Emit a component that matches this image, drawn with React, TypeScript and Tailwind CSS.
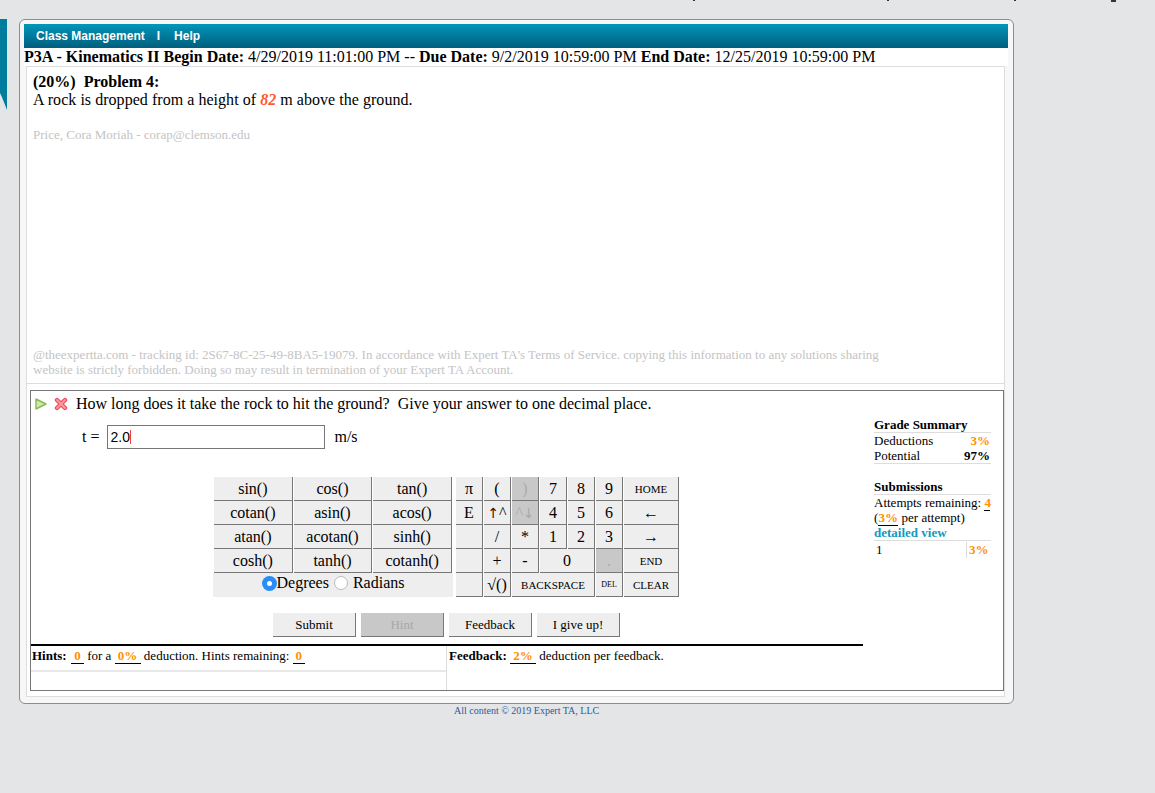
import React from "react";

const serif = "font-['Liberation_Serif',serif]";

function Fn({ t }: { t: string }) {
  return <div className="flex items-center justify-center bg-[#eeeeee] border-r border-b border-[#777] mr-px text-[16px] leading-[18px]">{t}</div>;
}

function Key({ t, cls = "text-[16px]", dis = false }: { t: React.ReactNode; cls?: string; dis?: boolean }) {
  return (
    <div className={`flex items-center justify-center mr-px border-r border-b border-[#777] leading-[18px] ${dis ? "bg-[#c8c8c8] text-[#aaa]" : "bg-[#eeeeee] text-black"} ${cls}`}>
      {t}
    </div>
  );
}

function Btn({ t, dis = false }: { t: string; dis?: boolean }) {
  return (
    <div className={`w-[83px] h-[24px] flex items-center justify-center border-r border-b border-[#777] text-[13px] ${dis ? "bg-[#c8c8c8] text-[#a8a8a8]" : "bg-[#eeeeee] text-black"}`}>
      {t}
    </div>
  );
}

function Val({ t, w }: { t: string; w: string }) {
  return <span className={`inline-block text-center font-bold text-[#ff9000] border-b border-black leading-[14px] ${w}`}>{t}</span>;
}

export default function App() {
  const fns = ["sin()", "cos()", "tan()", "cotan()", "asin()", "acos()", "atan()", "acotan()", "sinh()", "cosh()", "tanh()", "cotanh()"];
  return (
    <div className={`relative min-h-[793px] bg-[#e4e5e7] pt-[19px] pl-[19px] text-black ${serif}`}>
      <svg className="absolute left-0 top-[19px]" width="7" height="91" viewBox="0 0 7 91">
        <path d="M0 0H7V91C5 86 3 80 0 74Z" fill="#007c9d" />
      </svg>
      <div className="absolute left-[693px] top-0 h-px w-[2px] bg-[#333]" />
      <div className="absolute left-[887px] top-0 h-px w-[2px] bg-[#333]" />
      <div className="absolute left-[1014px] top-0 h-px w-[2px] bg-[#333]" />
      <div className="absolute left-[1111px] top-0 h-[2px] w-[5px] bg-[#333]" />

      <div className="w-[995px] h-[685px] border border-[#8c8c8c] rounded-[6px] bg-[#f7f7f7] pt-[4px] pl-[4px] pr-[5px]">
        <div className="h-[24px] bg-gradient-to-b from-[#0096bb] to-[#005f7d] flex items-center pl-[12px] font-['Liberation_Sans',sans-serif] font-bold text-[12px] text-white">
          <span>Class Management</span>
          <span className="ml-[12px]">I</span>
          <span className="ml-[14px]">Help</span>
        </div>
        <div className="h-[18px] bg-white text-[16px] leading-[18px] whitespace-nowrap">
          <b>P3A - Kinematics II Begin Date:</b> 4/29/2019 11:01:00 PM -- <b>Due Date:</b> 9/2/2019 10:59:00 PM <b>End Date:</b> 12/25/2019 10:59:00 PM
        </div>
        <div className="ml-[2px] w-[979px] h-[318px] border border-[#dddddd] bg-white pl-[6px] pt-[6px] flex flex-col">
          <div className="text-[16px] leading-[18px] font-bold">(20%)&nbsp; Problem 4:</div>
          <div className="text-[16px] leading-[18px] tracking-[0.04px]">
            A rock is dropped from a height of <b className="italic text-[#ff5a2c]">82</b> m above the ground.
          </div>
          <div className="mt-[19px] text-[13px] leading-[14px] text-[#c4c4c4]">Price, Cora Moriah - corap@clemson.edu</div>
          <div className="mt-auto mb-[6px] text-[13px] leading-[15px] text-[#c4c4c4] w-[860px]">
            @theexpertta.com - tracking id: 2S67-8C-25-49-8BA5-19079. In accordance with Expert TA's Terms of Service. copying this information to any solutions sharing website is strictly forbidden. Doing so may result in termination of your Expert TA Account.
          </div>
        </div>
        <div className="ml-[2px] w-[979px] h-[313px] border-x border-b border-[#dddddd] bg-white pl-[3px] pr-[1px] pt-[6px]">
          <div className="h-[301px] w-[974px] border border-[#777] flex flex-col">
            <div className="flex flex-1">
              <div className="w-[832px]">
                <div className="flex items-center h-[14px] mt-[6px] ml-[4px]">
                  <svg width="12" height="12" viewBox="0 0 12 12">
                    <path d="M1 1L11 6L1 11Z" fill="#cdeaa6" stroke="#8ab85a" strokeWidth="1.4" strokeLinejoin="round" />
                  </svg>
                  <svg className="ml-[7px]" width="14" height="14" viewBox="0 0 14 14">
                    <path d="M3 3L11 11M11 3L3 11" stroke="#ee5060" strokeWidth="4.4" strokeLinecap="round" />
                    <path d="M3 3L11 11M11 3L3 11" stroke="#ff9aa2" strokeWidth="1.8" strokeLinecap="round" />
                  </svg>
                  <span className="ml-[8px] text-[16px] leading-[18px] whitespace-nowrap">How long does it take the rock to hit the ground?&nbsp; Give your answer to one decimal place.</span>
                </div>
                <div className="flex items-center h-[24px] mt-[14px] ml-[51px] text-[16px]">
                  <span>t =</span>
                  <div className="ml-[8px] w-[218px] h-[24px] border border-[#777] bg-white flex items-center pl-[2px] text-[14px] font-['Liberation_Sans',sans-serif]">
                    2.0<span className="w-px h-[14px] bg-[#f04040]" />
                  </div>
                  <span className="ml-[9px]">m/s</span>
                </div>
                <div className="flex mt-[28px] ml-[183px]">
                  <div className="w-[239px]">
                    <div className="grid grid-cols-3 grid-rows-[repeat(4,24px)]">
                      {fns.map((f) => <Fn key={f} t={f} />)}
                    </div>
                    <div className="h-[24px] -ml-px w-[240px] bg-[#eeeeee] flex items-start justify-center pt-[1px] text-[16px] leading-[18px]">
                      <span className="mt-[2px] w-[15px] h-[15px] rounded-full bg-[#2a8cf5] flex items-center justify-center"><span className="w-[5px] h-[5px] rounded-full bg-white" /></span>
                      <span>Degrees</span>
                      <span className="ml-[5px] mt-[2px] w-[14px] h-[14px] rounded-full bg-white border border-[#bbb]" />
                      <span className="ml-[5px]">Radians</span>
                    </div>
                  </div>
                  <div className="ml-[3px] w-[224px] grid grid-cols-[repeat(6,28px)_56px] grid-rows-[repeat(5,24px)]">
                    <Key t="π" />
                    <Key t="(" />
                    <Key t=")" dis />
                    <Key t="7" />
                    <Key t="8" />
                    <Key t="9" />
                    <Key t="HOME" cls="text-[11px]" />
                    <Key t="E" />
                    <Key t={<span className="whitespace-nowrap"><span className="font-['DejaVu_Sans',sans-serif] text-[14px] text-[#4a1404]">↑</span>^</span>} />
                    <Key t={<span className="whitespace-nowrap">^<span className="font-['DejaVu_Sans',sans-serif] text-[14px]">↓</span></span>} dis />
                    <Key t="4" />
                    <Key t="5" />
                    <Key t="6" />
                    <Key t="←" />
                    <Key t="" />
                    <Key t="/" />
                    <Key t="*" />
                    <Key t="1" />
                    <Key t="2" />
                    <Key t="3" />
                    <Key t="→" />
                    <Key t="" />
                    <Key t="+" />
                    <Key t="-" />
                    <Key t="0" cls="col-span-2 text-[16px]" />
                    <Key t="." dis />
                    <Key t="END" cls="text-[11px]" />
                    <Key t="" />
                    <Key t={<span className="whitespace-nowrap">√()</span>} />
                    <Key t="BACKSPACE" cls="col-span-3 text-[11px]" />
                    <Key t="DEL" cls="text-[8px]" />
                    <Key t="CLEAR" cls="text-[11px]" />
                  </div>
                </div>
                <div className="flex gap-[5px] mt-[16px] ml-[242px]">
                  <Btn t="Submit" />
                  <Btn t="Hint" dis />
                  <Btn t="Feedback" />
                  <Btn t="I give up!" />
                </div>
              </div>
              <div className="ml-[11px] w-[117px] text-[13px] leading-[15px] pt-[26px]">
                <div className="font-bold border-b border-[#ddd]">Grade Summary</div>
                <div className="flex justify-between pr-[1px]"><span>Deductions</span><b className="text-[#ff9000]">3%</b></div>
                <div className="flex justify-between pr-[1px] border-b border-[#ddd]"><span>Potential</span><b>97%</b></div>
                <div className="mt-[15px] font-bold border-b border-[#ddd]">Submissions</div>
                <div className="h-[15px] whitespace-nowrap">Attempts remaining: <Val t="4" w="w-[6px]" /></div>
                <div className="h-[15px]">(<Val t="3%" w="w-[20px]" /> per attempt)</div>
                <div className="font-bold text-[#0f9ac0] border-b border-[#ddd]">detailed view</div>
                <div className="flex h-[17px] pt-px"><span className="w-[93px] pl-[2px] border-r border-[#ddd]">1</span><b className="pl-[2px] text-[#ff9000]">3%</b></div>
              </div>
            </div>
            <div className="h-[46px] border-t-2 border-black w-[832px] flex text-[13px] leading-[15px]">
              <div className="w-[416px] border-r border-[#ddd]">
                <div className="h-[26px] pt-[2px] pl-px border-b-2 border-[#e8e8e8] whitespace-nowrap">
                  <b>Hints:</b> <Val t="0" w="w-[13px] ml-px" /> for a <Val t="0%" w="w-[26px]" /> deduction. Hints remaining: <Val t="0" w="w-[12px]" />
                </div>
              </div>
              <div className="pl-[2px] pt-[2px] whitespace-nowrap">
                <b>Feedback:</b> <Val t="2%" w="w-[26px]" /> deduction per feedback.
              </div>
            </div>
          </div>
        </div>
      </div>
      <div className="w-[995px] pl-[435px] text-[10px] leading-[14px] text-[#2a5a9c]">All content © 2019 Expert TA, LLC</div>
    </div>
  );
}
